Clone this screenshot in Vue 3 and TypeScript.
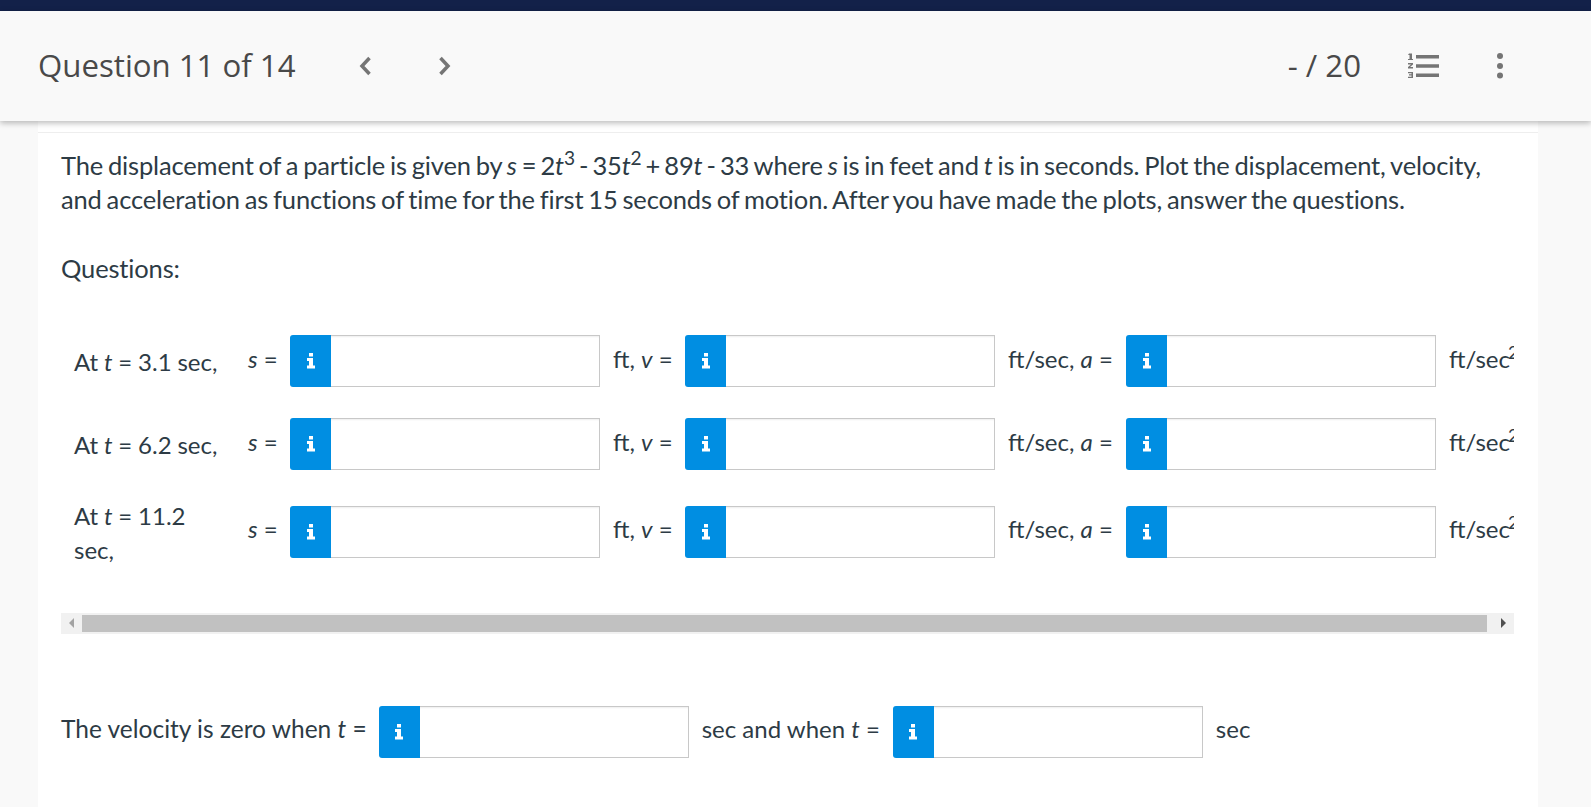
<script setup lang="ts">
interface Row { label: string }
const rows: Row[] = [
  { label: '3.1 sec,' },
  { label: '6.2 sec,' },
  { label: '11.2 sec,' },
]
const infoPath = 'M3 0.5h4v3.5h-4z M1 5.5h6v7.5h2v3h-8v-3h2v-4.5h-2z'
</script>

<template>
  <div class="page">
    <div class="navy"></div>
    <header class="head">
      <div class="title">Question 11 of 14</div>
      <svg class="chev first" viewBox="0 0 14 20" width="14" height="20"><path d="M11.500 2 4 10l7.500 8" /></svg>
      <svg class="chev second" viewBox="0 0 14 20" width="14" height="20"><path d="M2.500 2 10 10l-7.500 8" /></svg>
      <div class="score">- / 20</div>
      <svg class="list" viewBox="0 0 32 26" width="32" height="26">
        <path d="M9 2h23v3.600H9zM9 11.200h23v3.600H9zM9 20.400h23v3.600H9z" />
        <path d="M2 .5h3v5.500h1v1H1V6h1.500V2H1zM1 10h5v1.500l-3 2.500h3v1.500H1V14l3-2.500H1zM1 19h5v6H1v-1.300h3.500v-1.200H2v-1.200h2.500v-1H1z" />
      </svg>
      <svg class="dots" viewBox="0 0 8 28" width="8" height="28"><circle cx="4" cy="4" r="3" /><circle cx="4" cy="14" r="3" /><circle cx="4" cy="23.500" r="3" /></svg>
    </header>

    <main class="card">
      <p class="intro tight">
        The displacement of a particle is given by <i>s</i> <span class="math">= 2<i>t</i><sup>3</sup> - 35<i>t</i><sup>2</sup> + 89<i>t</i> - 33</span> where <i>s</i> is in feet and <i>t</i> is in seconds. Plot the displacement, velocity, and acceleration as functions of time for the first 15 seconds of motion. After you have made the plots, answer the questions.
      </p>
      <p class="qs tight">Questions:</p>

      <div class="scroller">
        <div v-for="r in rows" :key="r.label" class="row">
          <div class="lab">At <i>t</i> = {{ r.label }}</div>
          <span class="sym s"><i>s</i> =</span>
          <div class="field"><span class="btn"><svg viewBox="0 0 10 17" width="10" height="18"><path :d="infoPath" /></svg></span><span class="inp"></span></div>
          <span class="sym v">ft, <i>v</i> =</span>
          <div class="field"><span class="btn"><svg viewBox="0 0 10 17" width="10" height="18"><path :d="infoPath" /></svg></span><span class="inp"></span></div>
          <span class="sym a">ft/sec, <i>a</i> =</span>
          <div class="field"><span class="btn"><svg viewBox="0 0 10 17" width="10" height="18"><path :d="infoPath" /></svg></span><span class="inp"></span></div>
          <span class="sym end">ft/sec<sup>2</sup></span>
        </div>
      </div>

      <div class="track">
        <span class="arrow left"></span>
        <span class="thumb"></span>
        <span class="arrow right"></span>
      </div>

      <div class="bottom">
        <span class="sym first-sym">The velocity is zero when <i>t</i> =</span>
        <div class="field"><span class="btn"><svg viewBox="0 0 10 17" width="10" height="18"><path :d="infoPath" /></svg></span><span class="inp"></span></div>
        <span class="sym">sec and when <i>t</i> =</span>
        <div class="field"><span class="btn"><svg viewBox="0 0 10 17" width="10" height="18"><path :d="infoPath" /></svg></span><span class="inp"></span></div>
        <span class="sym">sec</span>
      </div>
    </main>
  </div>
</template>

<style>
html, body { margin: 0; background: #f9f9f9; overflow: hidden; }
</style>

<style scoped>
.page { height: 807px; background: #f9f9f9; overflow: hidden; font-family: Lato, sans-serif; color: #2d3b45; }
.navy { height: 11px; background: #132149; }
.head {
  position: relative; z-index: 2; height: 110px; background: #f9f9f9;
  box-shadow: 0 2px 6px rgba(0,0,0,.28);
  display: flex; align-items: center; padding: 0 0 0 38px; color: #494949;
  font-family: "Open Sans", sans-serif;
}
.title { font-size: 31.200px; width: 320px; margin-top: -2px; }
.chev { fill: none; stroke: #757575; stroke-width: 3.500; }
.chev.second { margin-left: 66px; }
.score { margin-left: auto; font-size: 31.200px; margin-top: -2px; }
.list { fill: #757575; margin-left: 46px; }
.dots { fill: #757575; margin-left: 57px; margin-right: 87px; }

.card { margin: 0 53px 0 38px; height: 686px; background: #fff; padding: 11px 24px 0 23px; box-sizing: border-box; position: relative; }
.card::before { content: ""; display: block; height: 1px; background: #eee; margin: 0 -24px 0 -23px; }
.tight { font-size: 25.500px; letter-spacing: -0.150px; word-spacing: -1.500px; }
.math { word-spacing: -2.300px; }
.intro { margin: 15px 0 0; line-height: 34px; }
.qs { margin: 35px 0 0; line-height: 34.500px; }

.scroller { margin-top: 34px; overflow: hidden; }
.row { display: flex; align-items: center; min-height: 83px; width: 1600px; padding-left: 13px; }
.row:last-child { min-height: 92px; }
.lab { width: 174px; font-size: 24px; line-height: 34.500px; flex: none; padding-right: 27px; box-sizing: border-box; margin-top: 3px; word-spacing: -0.300px; }
.sym { font-size: 24px; white-space: nowrap; flex: none; line-height: 34px; }
.first-sym { font-size: 24.500px; }
.row .sym { margin-top: -5px; }
.s { width: 42px; }
.v { width: 72px; margin-left: 13px; }
.a { width: 118px; margin-left: 13px; }
.end { margin-left: 13px; }
.end sup { margin-left: -2px; }
.field { display: flex; height: 52px; width: 310px; flex: none; }
.btn { width: 41px; background: #008ee2; border-radius: 3px 0 0 3px; display: flex; align-items: center; justify-content: center; fill: #fff; flex: none; }
.inp { flex: 1; background: #fff; border: 1px solid #c8c8c8; border-left: 0; box-sizing: border-box; box-shadow: inset 0 2px 2px -1px #eee; }
sup { font-size: 75%; line-height: 0; vertical-align: baseline; position: relative; top: -.5em; }

.track { display: flex; align-items: center; height: 21px; background: #f1f1f1; margin-top: 35px; }
.thumb { flex: 1; height: 17px; background: #c1c1c1; margin: 0 14px 0 8px; }
.arrow { width: 0; height: 0; border-style: solid; flex: none; }
.arrow.left { margin-left: 8px; border-width: 5px 5px 5px 0; border-color: transparent #a3a3a3 transparent transparent; }
.arrow.right { margin-right: 8px; border-width: 5px 0 5px 5px; border-color: transparent transparent transparent #505050; }

.bottom { display: flex; align-items: center; margin-top: 72px; }
.bottom .sym { padding-right: 13px; margin-top: -5px; }
.bottom .first-sym { padding-right: 12px; }
.bottom .field + .sym { padding-left: 13px; padding-right: 13px; }
</style>
